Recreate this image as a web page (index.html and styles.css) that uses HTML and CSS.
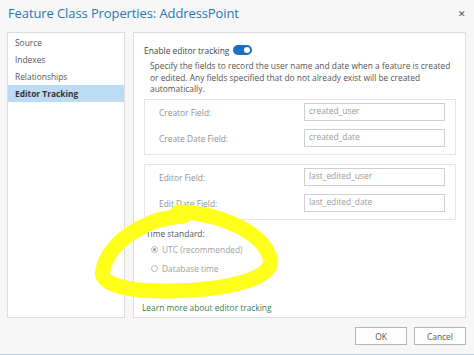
FILE: index.html
```html
<!DOCTYPE html>
<html>
<head>
    <link rel="stylesheet" href="styles.css">
</head>
<body>
    <div class="dialog">
        <div class="title-bar">
            <h1 class="title">Feature Class Properties: AddressPoint</h1>
            <span class="close">&#x2715;</span>
        </div>

        <div class="main">
            <div class="sidebar">
                <div class="nav-item">Source</div>
                <div class="nav-item">Indexes</div>
                <div class="nav-item">Relationships</div>
                <div class="nav-item active">Editor Tracking</div>
            </div>

            <div class="content">
                <div class="toggle-row">
                    <span>Enable editor tracking</span>
                    <span class="toggle"><span class="knob"></span></span>
                </div>
                <p class="info">Specify the fields to record the user name and date when a feature is created or edited. Any fields specified that do not already exist will be created automatically.</p>

                <div class="group">
                    <div class="field-row">
                        <span class="label">Creator Field:</span>
                        <span class="input">created_user</span>
                    </div>
                    <div class="field-row">
                        <span class="label">Create Date Field:</span>
                        <span class="input">created_date</span>
                    </div>
                </div>

                <div class="group">
                    <div class="field-row">
                        <span class="label">Editor Field:</span>
                        <span class="input">last_edited_user</span>
                    </div>
                    <div class="field-row">
                        <span class="label">Edit Date Field:</span>
                        <span class="input">last_edited_date</span>
                    </div>
                </div>

                <div class="time-label">Time standard:</div>
                <div class="radio-row"><span class="radio checked"></span>UTC (recommended)</div>
                <div class="radio-row"><span class="radio"></span>Database time</div>

                <a class="learn-more">Learn more about editor tracking</a>
            </div>
        </div>

        <div class="footer">
            <button class="btn">OK</button>
            <button class="btn">Cancel</button>
        </div>

        <!-- highlight scribble drawn over the dialog -->
        <svg class="scribble" width="474" height="355" viewBox="0 0 474 355">
            <path d="M178 212 C214 212 262 230 270 258 C276 280 222 290 172 291 C126 292 98 284 103 270 C106 254 120 238 140 228 C152 221 166 217 184 216"
                  fill="none" stroke="#ffff1a" stroke-width="15" stroke-linecap="round" stroke-linejoin="round"/>
            <path d="M171 209 L188 206 L189 217 L170 219 Z" fill="#ffff1a"/>
        </svg>
    </div>
</body>
</html>
```

FILE: styles.css
```css
body {
    margin: 0;
    background: #f7f7f7;
    font-family: "Open Sans", "Noto Sans", sans-serif;
    font-size: 8.4px;
    color: #444;
}

.dialog {
    position: relative;
    width: 474px;
    height: 354px;
    border-bottom: 1px solid #a9d1f2;
    overflow: hidden;
}

.title-bar {
    height: 32px;
    display: flex;
    align-items: center;
    justify-content: space-between;
    padding: 0 8px;
    box-sizing: border-box;
}

.title {
    margin: 0 0 6px 0;
    font-size: 13px;
    letter-spacing: -0.1px;
    font-weight: normal;
    color: #2b76b2;
}

.close {
    font-size: 9px;
    color: #555;
    margin: 0 0 6px 0;
}

.main {
    display: flex;
    gap: 8px;
    height: 286px;
    padding: 0 8px 0 7px;
}

.sidebar {
    width: 118px;
    background: white;
    border: 1px solid #dcdcdc;
    box-sizing: border-box;
    padding-top: 1px;
}

.nav-item {
    height: 17px;
    line-height: 17px;
    padding-left: 7px;
    color: #555;
}

.nav-item.active {
    background: #bcdcf5;
    font-weight: bold;
    color: #333;
}

.content {
    flex: 1;
    background: white;
    border: 1px solid #dcdcdc;
    box-sizing: border-box;
    padding: 11px 9px 3px 9px;
    display: flex;
    flex-direction: column;
}

.toggle-row {
    display: flex;
    align-items: center;
    gap: 4px;
    height: 12px;
    padding-left: 1px;
}

.toggle {
    width: 19px;
    height: 10px;
    border-radius: 5px;
    background: #1b6fc2;
    position: relative;
}

.knob {
    position: absolute;
    right: 2px;
    top: 2px;
    width: 6px;
    height: 6px;
    border-radius: 50%;
    background: white;
}

.info {
    margin: 4px 0 0 7px;
    line-height: 11.7px;
    color: #555;
}

.group {
    border: 1px solid #e6e6e6;
    margin: 4px 0 0 1px;
    padding: 3px 10px 7px 14px;
    display: flex;
    flex-direction: column;
    gap: 8px;
}

.group + .group {
    margin-top: 9px;
}

.field-row {
    display: grid;
    grid-template-columns: 1fr 141px;
    align-items: center;
    height: 18px;
}

.label {
    color: #909090;
}

.input {
    height: 18px;
    border: 1px solid #cfcfcf;
    box-sizing: border-box;
    padding: 0 0 0 4px;
    line-height: 14px;
    color: #9a9a9a;
}

.time-label {
    margin: 8px 0 0 3px;
    line-height: 12px;
    color: #555;
}

.radio-row {
    display: flex;
    align-items: center;
    gap: 4px;
    height: 19px;
    margin-left: 8px;
    color: #a0a0a0;
}

.radio-row:first-of-type {
    margin-top: 1px;
}

.radio {
    width: 7px;
    height: 7px;
    border: 1px solid #b8b8b8;
    border-radius: 50%;
    box-sizing: border-box;
    position: relative;
}

.radio.checked::after {
    content: "";
    position: absolute;
    left: 1px;
    top: 1px;
    width: 3px;
    height: 3px;
    border-radius: 50%;
    background: #999;
}

.learn-more {
    margin-top: auto;
    color: #3d7f3d;
    line-height: 12px;
    margin-left: -1px;
}

.footer {
    height: 36px;
    display: flex;
    justify-content: flex-end;
    align-items: center;
    gap: 7px;
    padding-right: 8px;
}

.btn {
    width: 52px;
    height: 18px;
    background: #fdfdfd;
    border: 1px solid #b5b5b5;
    font-family: "Open Sans", "Noto Sans", sans-serif;
    font-size: 8.4px;
    color: #555;
    padding: 0;
}

.scribble {
    position: absolute;
    left: 0;
    top: 0;
    pointer-events: none;
}
```
